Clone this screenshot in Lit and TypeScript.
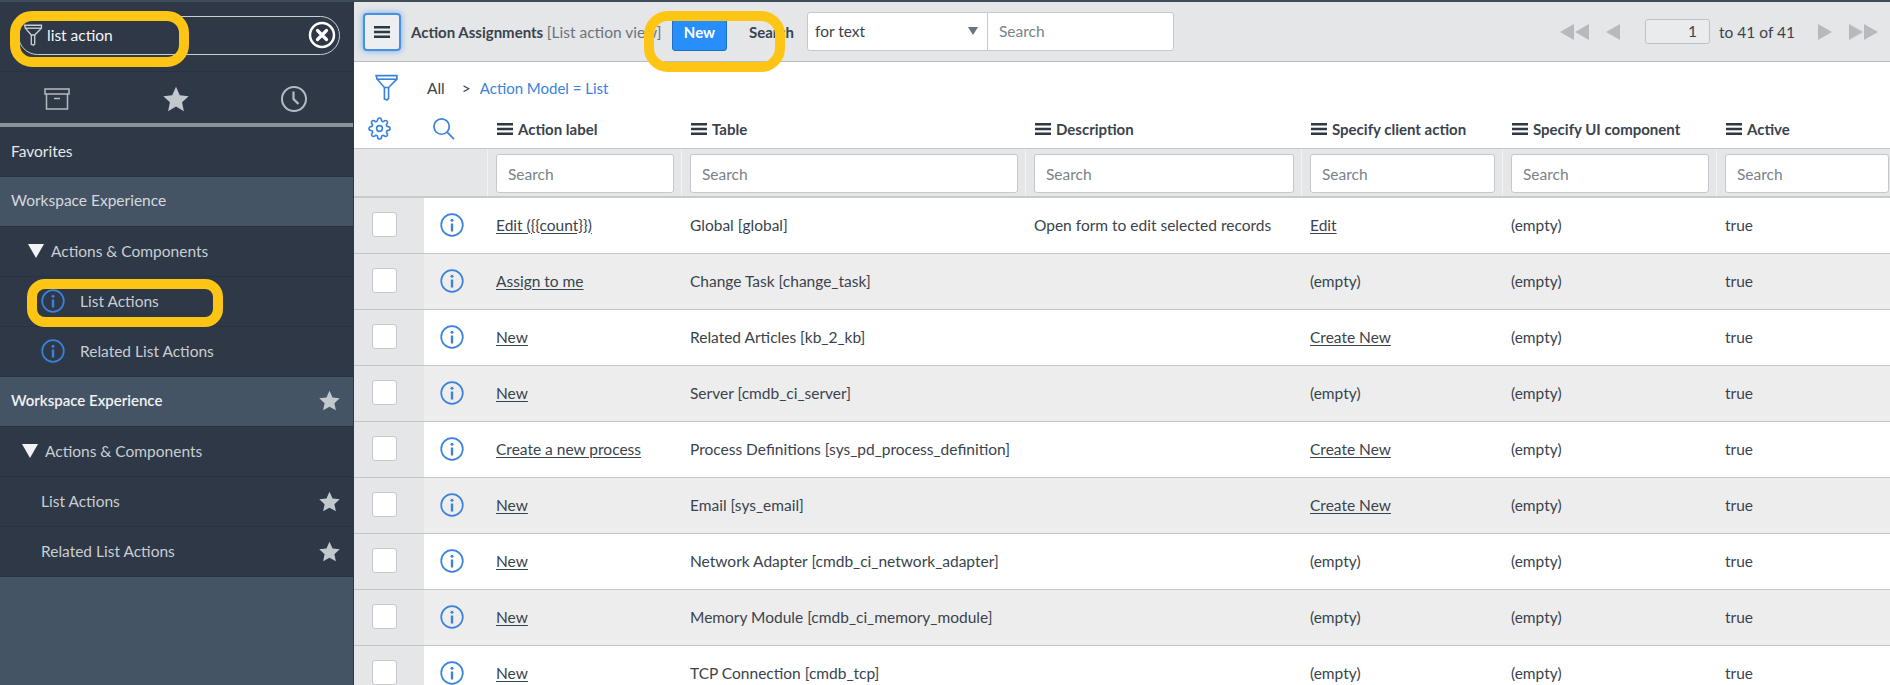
import { LitElement, html, css, svg } from 'lit';
import { customElement } from 'lit/decorators.js';

const COLUMNS = ['Action label', 'Table', 'Description', 'Specify client action', 'Specify UI component', 'Active'];

const ROWS = [
  ['Edit ({{count}})', 'Global [global]', 'Open form to edit selected records', 'Edit', '(empty)', 'true'],
  ['Assign to me', 'Change Task [change_task]', '', '(empty)', '(empty)', 'true'],
  ['New', 'Related Articles [kb_2_kb]', '', 'Create New', '(empty)', 'true'],
  ['New', 'Server [cmdb_ci_server]', '', '(empty)', '(empty)', 'true'],
  ['Create a new process', 'Process Definitions [sys_pd_process_definition]', '', 'Create New', '(empty)', 'true'],
  ['New', 'Email [sys_email]', '', 'Create New', '(empty)', 'true'],
  ['New', 'Network Adapter [cmdb_ci_network_adapter]', '', '(empty)', '(empty)', 'true'],
  ['New', 'Memory Module [cmdb_ci_memory_module]', '', '(empty)', '(empty)', 'true'],
  ['New', 'TCP Connection [cmdb_tcp]', '', '(empty)', '(empty)', 'true'],
];

const NAV = [
  { kind: 'plain', label: 'Favorites' },
  { kind: 'app', label: 'Workspace Experience', dim: true },
  { kind: 'group', label: 'Actions & Components', indent: 28 },
  { kind: 'link', label: 'List Actions', info: true },
  { kind: 'link', label: 'Related List Actions', info: true },
  { kind: 'app', label: 'Workspace Experience', star: true },
  { kind: 'group', label: 'Actions & Components', indent: 22 },
  { kind: 'link', label: 'List Actions', star: true },
  { kind: 'link', label: 'Related List Actions', star: true },
];

const funnel = (color: string, w: number, h: number) => html`
  <svg width=${w} height=${h} viewBox="0 0 22 26" fill="none" stroke=${color} stroke-width="1.6">
    <path d="M1 1.5h20v3.500L13 13H9L2 5z" />
    <path d="M1.500 5h19" />
    <path d="M9 13v11l2.500 1 1.500-1.500V13" />
  </svg>
`;

const info = (size: number) => html`
  <svg class="info" width=${size} height=${size} viewBox="0 0 24 24" fill="none">
    <circle cx="12" cy="12" r="10.800" stroke="#3b82dc" stroke-width="1.700" />
    <circle cx="12" cy="7.200" r="1.500" fill="#3b82dc" />
    <rect x="10.800" y="10.500" width="2.400" height="8" fill="#3b82dc" />
  </svg>
`;

const star = (size: number, color = '#c3c8cd') => html`
  <svg width=${size} height=${size} viewBox="0 0 24 24">
    <path fill=${color} d="M12 .8l3.500 7.700 8.200.9-6.100 5.600 1.700 8.200L12 19l-7.300 4.200 1.700-8.200L.3 9.400l8.200-.9z" />
  </svg>
`;

const bars = (w: number, h: number, color = '#2f3842') => html`
  <svg width=${w} height=${h} viewBox="0 0 16 12"><path fill=${color} d="M0 0h16v2.400H0zM0 4.800h16v2.400H0zM0 9.600h16V12H0z" /></svg>
`;

const gear = svg`
  <circle cx="12" cy="12" r="3" />
  <path d="M19.400 15a1.650 1.650 0 0 0 .33 1.820l.06.06a2 2 0 0 1 0 2.830 2 2 0 0 1-2.830 0l-.06-.06a1.650 1.650 0 0 0-1.820-.33 1.650 1.650 0 0 0-1 1.510V21a2 2 0 0 1-2 2 2 2 0 0 1-2-2v-.09A1.650 1.650 0 0 0 9 19.400a1.650 1.650 0 0 0-1.820.33l-.06.06a2 2 0 0 1-2.830 0 2 2 0 0 1 0-2.830l.06-.06a1.650 1.650 0 0 0 .33-1.820 1.650 1.650 0 0 0-1.510-1H3a2 2 0 0 1-2-2 2 2 0 0 1 2-2h.09A1.650 1.650 0 0 0 4.600 9a1.650 1.650 0 0 0-.33-1.820l-.06-.06a2 2 0 0 1 0-2.830 2 2 0 0 1 2.830 0l.06.06a1.650 1.650 0 0 0 1.820.33H9a1.650 1.650 0 0 0 1-1.510V3a2 2 0 0 1 2-2 2 2 0 0 1 2 2v.09a1.650 1.650 0 0 0 1 1.510 1.650 1.650 0 0 0 1.820-.33l.06-.06a2 2 0 0 1 2.830 0 2 2 0 0 1 0 2.830l-.06.06a1.650 1.650 0 0 0-.33 1.820V9a1.650 1.650 0 0 0 1.510 1H21a2 2 0 0 1 2 2 2 2 0 0 1-2 2h-.09a1.650 1.650 0 0 0-1.510 1z" />
`;

@customElement('app-root')
export class AppRoot extends LitElement {
  static styles = css`
    :host {
      display: flex;
      position: relative;
      height: 685px;
      overflow: hidden;
      font-family: 'Lato', 'Noto Sans', sans-serif;
      font-size: 15.5px;
      color: #3a434d;
      background: #fff;
    }

    /* sidebar */
    .sidebar {
      width: 353px;
      flex: none;
      background: #455464;
      border-top: 2px solid #3f4d5b;
      box-sizing: border-box;
      color: #c9ced3;
    }
    .filter-area {
      height: 70px;
      background: #2e3846;
      padding: 14px 13px 0 18px;
      box-sizing: border-box;
      border-bottom: 1px solid #29323e;
    }
    .pill {
      height: 39px;
      border: 1px solid #c9ced3;
      border-radius: 20px;
      display: flex;
      align-items: center;
      padding: 0 5px 1px 4px;
      box-sizing: border-box;
      color: #f4f5f6;
      font-size: 15.5px;
      gap: 4px;
    }
    .pill .value {
      flex: 1;
    }
    .tabs {
      height: 55px;
      box-sizing: border-box;
      padding-top: 2px;
      background: #2e3846;
      display: grid;
      grid-template-columns: repeat(3, 1fr);
      border-bottom: 4px solid #8a929a;
      place-items: center;
    }
    .tabs .box {
      margin-right: 4px;
    }
    .nav-row {
      height: 50px;
      box-sizing: border-box;
      display: flex;
      align-items: center;
      background: #2e3846;
      border-bottom: 1px solid #29323e;
      padding-right: 13px;
      padding-bottom: 1px;
    }
    .nav-row span {
      flex: 1;
    }
    .nav-row.plain {
      padding-left: 11px;
      color: #e6e8ea;
    }
    .nav-row.app {
      padding-left: 11px;
      padding-bottom: 3px;
      background: #455464;
      font-weight: 600;
      font-size: 15px;
      color: #f1f2f4;
    }
    .nav-row.app.dim {
      font-weight: 400;
      font-size: 15.5px;
      color: #d5d9dd;
    }
    .nav-row.group {
      gap: 7px;
    }
    .nav-row.link {
      padding-left: 41px;
    }
    .nav-row.link.with-info {
      gap: 15px;
    }
    .caret {
      width: 0;
      height: 0;
      border-left: 8px solid transparent;
      border-right: 8px solid transparent;
      border-top: 14px solid #f2f3f4;
      flex: none;
    }

    /* main column */
    .main {
      flex: 1;
      min-width: 0;
      border-left: 1px solid #2e3846;
      border-top: 2px solid #3f4d5b;
    }
    .toolbar {
      height: 60px;
      box-sizing: border-box;
      background: #e4e6e8;
      border-bottom: 1px solid #b9bdc1;
      display: flex;
      align-items: center;
      padding: 0 12px 0 9px;
    }
    .menu-btn {
      width: 38px;
      height: 38px;
      box-sizing: border-box;
      border: 2px solid #4a90e2;
      border-radius: 4px;
      background: #eceef0;
      box-shadow: 0 0 6px #6aa9f0;
      display: flex;
      align-items: center;
      justify-content: center;
      margin-right: 10px;
    }
    .title {
      font-weight: 700;
      font-size: 15px;
      white-space: nowrap;
      width: 261px;
      flex: none;
    }
    .title em {
      font-style: normal;
      font-weight: 400;
      font-size: 15.5px;
      color: #6b737b;
    }
    .new-btn {
      width: 55px;
      height: 39px;
      box-sizing: border-box;
      background: #278efc;
      border: 1px solid #1f6fc6;
      border-radius: 3px;
      color: #fff;
      font-size: 15px;
      font-weight: 700;
      display: flex;
      align-items: center;
      justify-content: center;
      flex: none;
    }
    .search-btn {
      width: 80px;
      flex: none;
      padding-left: 22px;
      box-sizing: border-box;
      font-size: 15px;
      font-weight: 700;
      white-space: nowrap;
    }
    .select {
      width: 181px;
      height: 39px;
      box-sizing: border-box;
      background: #fff;
      border: 1px solid #c5c9cd;
      border-radius: 3px 0 0 3px;
      display: flex;
      align-items: center;
      justify-content: space-between;
      padding: 0 9px 0 7px;
      flex: none;
      margin-bottom: 1px;
    }
    .select i {
      width: 0;
      height: 0;
      border-left: 5px solid transparent;
      border-right: 5px solid transparent;
      border-top: 8px solid #6b737b;
    }
    .field {
      height: 39px;
      background: #fff;
      border: 1px solid #c5c9cd;
      border-radius: 3px;
      box-sizing: border-box;
      display: flex;
      align-items: center;
      padding-left: 11px;
      color: #7a828a;
    }
    .toolbar .field {
      width: 187px;
      margin-left: -1px;
      margin-bottom: 1px;
      flex: none;
      border-radius: 0 3px 3px 0;
    }
    .pager {
      margin-left: auto;
      display: flex;
      align-items: center;
    }
    .page-input {
      width: 65px;
      height: 25px;
      box-sizing: border-box;
      border: 1px solid #bfc3c7;
      border-radius: 3px;
      background: #e9ebec;
      text-align: right;
      padding-right: 12px;
      line-height: 23px;
      margin: 0 9px 0 25px;
    }
    .to {
      margin-right: 23px;
    }

    .crumbs {
      height: 53px;
      display: flex;
      align-items: center;
      padding: 0 0 2px 21px;
      box-sizing: border-box;
    }
    .crumbs .all {
      margin-left: 29px;
    }
    .crumbs .sep {
      margin: 0 9px 0 17px;
    }
    .crumbs .cond {
      color: #3b82dc;
      font-size: 15px;
    }

    /* list */
    .grid-row {
      display: grid;
      grid-template-columns: 70px 63px 194px 344px 276px 201px 214px 174px;
    }
    .head {
      height: 34px;
      box-sizing: border-box;
      padding-bottom: 6px;
      align-items: center;
      border-bottom: 1px solid #c5c9cd;
      font-weight: 700;
      font-size: 15px;
      background: #fff;
    }
    .head .col {
      display: flex;
      align-items: center;
      gap: 5px;
      padding-left: 10px;
      white-space: nowrap;
    }
    .head .tool {
      display: flex;
      padding-left: 8px;
    }
    .head .tool.first {
      padding-left: 14px;
    }
    .filters {
      height: 49px;
      background: #e4e6e8;
      border-bottom: 2px solid #c8cbce;
      box-sizing: border-box;
    }
    .filters .cell {
      padding: 5px 7px 0 8px;
      border-left: 1px solid #f2f3f4;
    }
    .filters .cell:last-child {
      padding-right: 1px;
    }
    .row {
      height: 56px;
      box-sizing: border-box;
      border-bottom: 1px solid #c3c6c9;
      align-items: stretch;
    }
    .row:nth-child(even) {
      background: #ededee;
    }
    .row > div {
      display: flex;
      align-items: center;
      padding-left: 9px;
      padding-bottom: 2px;
      white-space: nowrap;
    }
    .row .check-cell {
      background: #e4e6e8;
      padding-left: 18px;
    }
    .check {
      width: 25px;
      height: 25px;
      box-sizing: border-box;
      background: #fff;
      border: 1px solid #c5c9cd;
      border-radius: 3px;
    }
    .row .info-cell {
      padding-left: 16px;
    }
    .row u {
      text-underline-offset: 2px;
    }

    /* yellow callouts drawn over the screen */
    .mark {
      position: absolute;
      box-sizing: border-box;
      border: 10px solid #fec514;
      pointer-events: none;
    }
    .mark.search {
      left: 10px;
      top: 11px;
      width: 179px;
      height: 56px;
      border-radius: 22px;
    }
    .mark.link {
      left: 27px;
      top: 279px;
      width: 196px;
      height: 48px;
      border-radius: 18px;
    }
    .mark.buttons {
      left: 644px;
      top: 11px;
      width: 141px;
      height: 61px;
      border-radius: 24px;
    }
  `;

  private renderNav(item: any) {
    if (item.kind === 'group') {
      return html`<div class="nav-row group" style="padding-left:${item.indent}px">
        <i class="caret"></i><span>${item.label}</span>
      </div>`;
    }
    const cls = `nav-row ${item.kind} ${item.dim ? 'dim' : ''} ${item.info ? 'with-info' : ''}`;
    return html`<div class=${cls}>
      ${item.info ? info(24) : ''}<span>${item.label}</span>${item.star ? star(21) : ''}
    </div>`;
  }

  private renderCell(text: string) {
    const isLink = text !== '' && text !== '(empty)';
    return html`<div>${isLink ? html`<u>${text}</u>` : text}</div>`;
  }

  render() {
    return html`
      <div class="sidebar">
        <div class="filter-area">
          <div class="pill">
            ${funnel('#c9ced3', 20, 22)}
            <span class="value">list action</span>
            <svg width="28" height="28" viewBox="0 0 28 28" style="margin-right:-2px">
              <circle cx="14" cy="14" r="12" fill="none" stroke="#fff" stroke-width="2.500" />
              <path d="M9.500 9.500l9 9M18.500 9.500l-9 9" stroke="#fff" stroke-width="3.200" stroke-linecap="round" />
            </svg>
          </div>
        </div>
        <div class="tabs">
          <svg class="box" width="26" height="22" viewBox="0 0 26 22" fill="none" stroke="#b5bbc1" stroke-width="1.500">
            <path d="M1 1h24v5H1zM2.500 6v15h21V6M10 10.500h6" />
          </svg>
          ${star(26)}
          <svg width="28" height="28" viewBox="0 0 28 28" fill="none" stroke="#b5bbc1">
            <circle cx="14" cy="14" r="12" stroke-width="2" />
            <path d="M13.500 6.500V14l5 5" stroke-width="2.200" />
          </svg>
        </div>
        ${NAV.map((item) => this.renderNav(item))}
      </div>

      <div class="main">
        <div class="toolbar">
          <div class="menu-btn">${bars(16, 12)}</div>
          <div class="title">Action Assignments <em>[List action view]</em></div>
          <div class="new-btn">New</div>
          <div class="search-btn">Search</div>
          <div class="select"><span>for text</span><i></i></div>
          <div class="field">Search</div>
          <div class="pager">
            <svg width="60" height="16" viewBox="0 0 60 16" fill="#b6babf">
              <path d="M14 0v16L0 8zM29 0v16L15 8zM60 0v16L46 8z" />
            </svg>
            <div class="page-input">1</div>
            <span class="to">to 41 of 41</span>
            <svg width="60" height="16" viewBox="0 0 60 16" fill="#b6babf">
              <path d="M0 0v16l14-8zM31 0v16l14-8zM46 0v16l14-8z" />
            </svg>
          </div>
        </div>

        <div class="crumbs">
          ${funnel('#3b82dc', 23, 27)}
          <span class="all">All</span>
          <span class="sep">&gt;</span>
          <span class="cond">Action Model = List</span>
        </div>

        <div class="grid-row head">
          <div class="tool first">
            <svg width="23" height="23" viewBox="0 0 24 24" fill="none" stroke="#3b82dc" stroke-width="1.700">${gear}</svg>
          </div>
          <div class="tool">
            <svg width="23" height="23" viewBox="0 0 24 24" fill="none" stroke="#3b82dc" stroke-width="1.800">
              <circle cx="10" cy="10" r="8" /><path d="M16 16l7 7" />
            </svg>
          </div>
          ${COLUMNS.map((c) => html`<div class="col">${bars(16, 12)}<span>${c}</span></div>`)}
        </div>

        <div class="grid-row filters">
          <div></div>
          <div></div>
          ${COLUMNS.map(() => html`<div class="cell"><div class="field">Search</div></div>`)}
        </div>

        <div class="rows">
          ${ROWS.map(
            (r) => html`
              <div class="grid-row row">
                <div class="check-cell"><div class="check"></div></div>
                <div class="info-cell">${info(24)}</div>
                ${r.map((c, i) => (i === 1 || i === 2 || i === 5 ? html`<div>${c}</div>` : this.renderCell(c)))}
              </div>
            `
          )}
        </div>
      </div>

      <div class="mark search"></div>
      <div class="mark link"></div>
      <div class="mark buttons"></div>
    `;
  }
}
